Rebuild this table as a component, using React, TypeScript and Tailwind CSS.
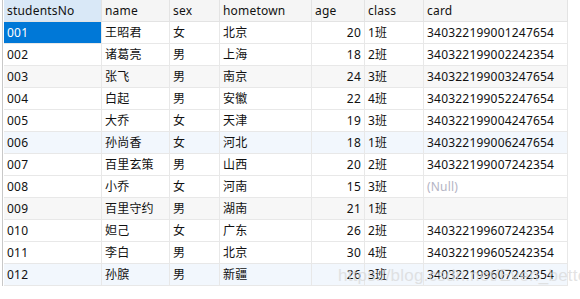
import React from "react";

const columns = [
  { key: "no", label: "studentsNo", w: "w-[98px]" },
  { key: "name", label: "name", w: "w-[68px]" },
  { key: "sex", label: "sex", w: "w-[50px]" },
  { key: "town", label: "hometown", w: "w-[92px]" },
  { key: "age", label: "age", w: "w-[53px]" },
  { key: "cls", label: "class", w: "w-[59px]" },
  { key: "card", label: "card", w: "w-[144px]" },
];

const rows: (string | null)[][] = [
  ["001", "王昭君", "女", "北京", "20", "1班", "340322199001247654"],
  ["002", "诸葛亮", "男", "上海", "18", "2班", "340322199002242354"],
  ["003", "张飞", "男", "南京", "24", "3班", "340322199003247654"],
  ["004", "白起", "男", "安徽", "22", "4班", "340322199052247654"],
  ["005", "大乔", "女", "天津", "19", "3班", "340322199004247654"],
  ["006", "孙尚香", "女", "河北", "18", "1班", "340322199006247654"],
  ["007", "百里玄策", "男", "山西", "20", "2班", "340322199007242354"],
  ["008", "小乔", "女", "河南", "15", "3班", null],
  ["009", "百里守约", "男", "湖南", "21", "1班", ""],
  ["010", "妲己", "女", "广东", "26", "2班", "340322199607242354"],
  ["011", "李白", "男", "北京", "30", "4班", "340322199605242354"],
  ["012", "孙膑", "男", "新疆", "26", "3班", "340322199607242354"],
];

// row tint, by index
const rowBg = (i: number) => {
  if (i === 2 || i === 8) return "bg-[#f7f7f7]";
  if (i === 5 || i === 11) return "bg-[#f2f7fd]";
  return "bg-white";
};

export default function App() {
  return (
    <div
      className="relative w-[580px] h-[299px] bg-white text-[12px] tracking-[0.2px] text-[#111] overflow-hidden"
      style={{ fontFamily: '"Noto Sans", "Noto Sans CJK SC", sans-serif' }}
    >
      <div className="ml-[2px] border-l border-[#c8c8c8] pl-px w-fit">
        {/* header */}
        <div className="flex h-[22px]">
          {columns.map((c, ci) => (
            <div
              key={c.key}
              className={`${c.w} shrink-0 flex items-center px-[3px] border-r border-b border-[#e3e3e3] ${
                ci === 0 ? "bg-[#d9e8f7]" : "bg-[#f5f5f5]"
              }`}
            >
              {c.label}
            </div>
          ))}
        </div>

        {rows.map((r, i) => (
          <div key={i} className={`flex h-[22px] ${rowBg(i)}`}>
            {r.map((v, ci) => {
              const c = columns[ci];
              const selected = i === 0 && ci === 0;
              return (
                <div
                  key={c.key}
                  className={`${c.w} shrink-0 flex items-center px-[3px] border-r border-b border-[#e8e8e8] ${
                    ci === 4 ? "justify-end" : ""
                  } ${selected ? "bg-[#0078d7] text-white" : ""}`}
                >
                  {v === null ? <span className="text-[#b4b4c4]">(Null)</span> : v}
                </div>
              );
            })}
          </div>
        ))}
      </div>

      {/* watermark */}
      <div
        className="absolute left-[338px] top-[263px] text-[17px] text-[#d8d8d8] opacity-70 pointer-events-none"
        style={{ fontFamily: '"Liberation Sans", sans-serif' }}
      >
        https://blog.csdn.net/Even_better
      </div>
    </div>
  );
}
